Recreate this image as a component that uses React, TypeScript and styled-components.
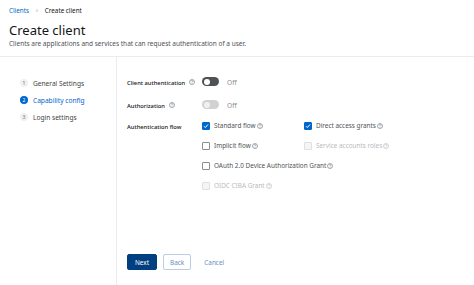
import React from 'react';
import styled, { createGlobalStyle } from 'styled-components';

const GlobalStyle = createGlobalStyle`
  html, body {
    margin: 0;
    padding: 0;
    background: #ffffff;
    font-family: 'Noto Sans', 'Open Sans', sans-serif;
    color: #151515;
  }
`;

const Page = styled.div`
  width: 474px;
  height: 285px;
  display: flex;
  flex-direction: column;
  overflow: hidden;
`;

const Header = styled.header`
  padding: 4px 9px 0;
  height: 52px;
  border-bottom: 1px solid #ececec;
  box-sizing: content-box;
`;

const Breadcrumb = styled.nav`
  display: flex;
  align-items: center;
  gap: 5px;
  font-size: 6.3px;
  height: 12px;
`;

const Crumb = styled.span<{ active?: boolean }>`
  color: ${({ active }) => (active ? '#151515' : '#0066cc')};
`;

const Sep = styled.span`
  color: #6a6e73;
  font-size: 6px;
  margin: 0 2px;
`;

const Title = styled.h1`
  margin: 6px 0 0;
  font-size: 13px;
  font-weight: 400;
  line-height: 16px;
`;

const Subtitle = styled.p`
  margin: 1px 0 0;
  font-size: 6.5px;
  line-height: 9px;
  color: #4f5255;
`;

const Body = styled.div`
  flex: 1;
  display: grid;
  grid-template-columns: 117px 1fr;
`;

const Steps = styled.ol`
  list-style: none;
  margin: 0;
  padding: 21px 0 0 20px;
  border-right: 1px solid #ececec;
  display: flex;
  flex-direction: column;
  gap: 7px;
`;

const Step = styled.li<{ current?: boolean }>`
  display: flex;
  align-items: center;
  gap: 5px;
  height: 10px;
  font-size: 6.6px;
  color: ${({ current }) => (current ? '#0066cc' : '#3c3f42')};
`;

const StepNum = styled.span<{ current?: boolean }>`
  width: 8px;
  height: 8px;
  border-radius: 50%;
  display: inline-flex;
  align-items: center;
  justify-content: center;
  font-size: 5px;
  background: ${({ current }) => (current ? '#0066cc' : '#f0f0f0')};
  color: ${({ current }) => (current ? '#ffffff' : '#6a6e73')};
`;

const Content = styled.div`
  display: flex;
  flex-direction: column;
  padding: 21px 0 15px 10px;
`;

const Form = styled.div`
  display: grid;
  grid-template-columns: 75px 1fr;
`;

const Label = styled.div<{ h: number }>`
  height: ${({ h }) => h}px;
  display: flex;
  align-items: flex-start;
  padding-top: 1px;
  font-size: 5.8px;
  font-weight: 500;
  color: #151515;
`;

const Field = styled.div<{ h: number }>`
  height: ${({ h }) => h}px;
  display: flex;
  align-items: flex-start;
`;

const Switch = styled.span<{ disabled?: boolean }>`
  width: 17px;
  height: 9px;
  border-radius: 5px;
  background: ${({ disabled }) => (disabled ? '#d2d2d2' : '#4f5255')};
  position: relative;
  margin-top: -1px;

  &::after {
    content: '';
    position: absolute;
    left: 1.5px;
    top: 1.5px;
    width: 6px;
    height: 6px;
    border-radius: 50%;
    background: ${({ disabled }) => (disabled ? '#f0f0f0' : '#ffffff')};
  }
`;

const SwitchText = styled.span`
  margin-left: 8px;
  font-size: 6.6px;
  color: #8a8d90;
`;

const FlowGrid = styled.div`
  display: grid;
  grid-template-columns: 102px 1fr;
  grid-auto-rows: 20px;
`;

const Check = styled.label<{ wide?: boolean; disabled?: boolean }>`
  display: flex;
  align-items: flex-start;
  gap: 4px;
  font-size: 6.4px;
  white-space: nowrap;
  grid-column: ${({ wide }) => (wide ? '1 / span 2' : 'auto')};
  color: ${({ disabled }) => (disabled ? '#b8bbbe' : '#4f5255')};
`;

const CheckText = styled.span`
  display: inline-flex;
  align-items: center;
  line-height: 7px;
`;

const Box = styled.span<{ checked?: boolean; disabled?: boolean }>`
  width: 8px;
  height: 8px;
  box-sizing: border-box;
  border-radius: 1px;
  margin-top: -0.5px;
  flex: none;
  display: inline-flex;
  align-items: center;
  justify-content: center;
  background: ${({ checked, disabled }) =>
    checked ? '#0066cc' : disabled ? '#f5f5f5' : '#ffffff'};
  border: 1px solid
    ${({ checked, disabled }) =>
      checked ? '#0066cc' : disabled ? '#e0e0e0' : '#8a8d90'};
`;

const Help = styled.span<{ faded?: boolean; gap?: number }>`
  display: inline-flex;
  margin-left: ${({ gap }) => gap ?? 1}px;
  opacity: ${({ faded }) => (faded ? 0.5 : 1)};
`;

const Footer = styled.div`
  margin-top: auto;
  display: flex;
  align-items: center;
  gap: 6px;
`;

const Button = styled.button<{ variant: 'primary' | 'secondary' | 'link' }>`
  height: 16px;
  padding: 0 ${({ variant }) => (variant === 'primary' ? 7 : 6)}px;
  font-family: inherit;
  font-size: 6.4px;
  border-radius: 2px;
  cursor: pointer;
  background: ${({ variant }) => (variant === 'primary' ? '#004080' : '#ffffff')};
  color: ${({ variant }) => (variant === 'primary' ? '#ffffff' : '#6a8fc0')};
  border: 1px solid
    ${({ variant }) =>
      variant === 'primary' ? '#004080' : variant === 'secondary' ? '#b9cde6' : 'transparent'};
`;

const HelpIcon = ({ faded, gap }: { faded?: boolean; gap?: number }) => (
  <Help faded={faded} gap={gap}>
    <svg width="6" height="6" viewBox="0 0 12 12">
      <circle cx="6" cy="6" r="5" fill="none" stroke="#6a6e73" strokeWidth="1.2" />
      <path d="M4.4 4.6a1.6 1.6 0 1 1 2.3 1.4c-.5.3-.7.6-.7 1.1" fill="none" stroke="#6a6e73" strokeWidth="1.1" />
      <circle cx="6" cy="8.8" r="0.7" fill="#6a6e73" />
    </svg>
  </Help>
);

const CheckMark = () => (
  <svg width="6" height="6" viewBox="0 0 12 12">
    <path d="M2 6.5l2.6 2.6L10 3" fill="none" stroke="#ffffff" strokeWidth="2" />
  </svg>
);

type Flow = { label: string; checked?: boolean; disabled?: boolean; wide?: boolean };

const flows: Flow[] = [
  { label: 'Standard flow', checked: true },
  { label: 'Direct access grants', checked: true },
  { label: 'Implicit flow' },
  { label: 'Service accounts roles', disabled: true },
  { label: 'OAuth 2.0 Device Authorization Grant', wide: true },
  { label: 'OIDC CIBA Grant', disabled: true, wide: true }
];

const steps = ['General Settings', 'Capability config', 'Login settings'];

const App: React.FC = () => (
  <Page>
    <GlobalStyle />
    <Header>
      <Breadcrumb>
        <Crumb>Clients</Crumb>
        <Sep>›</Sep>
        <Crumb active>Create client</Crumb>
      </Breadcrumb>
      <Title>Create client</Title>
      <Subtitle>
        Clients are applications and services that can request authentication of a user.
      </Subtitle>
    </Header>
    <Body>
      <Steps>
        {steps.map((s, i) => (
          <Step key={s} current={i === 1}>
            <StepNum current={i === 1}>{i + 1}</StepNum>
            {s}
          </Step>
        ))}
      </Steps>
      <Content>
        <Form>
          <Label h={22}>
            Client authentication
            <HelpIcon gap={4} />
          </Label>
          <Field h={22}>
            <Switch />
            <SwitchText>Off</SwitchText>
          </Field>
          <Label h={20}>
            Authorization
            <HelpIcon gap={4} />
          </Label>
          <Field h={20}>
            <Switch disabled />
            <SwitchText>Off</SwitchText>
          </Field>
          <Label h={80}>Authentication flow</Label>
          <Field h={80}>
            <FlowGrid>
              {flows.map((f) => (
                <Check key={f.label} wide={f.wide} disabled={f.disabled}>
                  <Box checked={f.checked} disabled={f.disabled}>
                    {f.checked && <CheckMark />}
                  </Box>
                  <CheckText>
                    {f.label}
                    <HelpIcon faded={f.disabled} />
                  </CheckText>
                </Check>
              ))}
            </FlowGrid>
          </Field>
        </Form>
        <Footer>
          <Button variant="primary">Next</Button>
          <Button variant="secondary">Back</Button>
          <Button variant="link">Cancel</Button>
        </Footer>
      </Content>
    </Body>
  </Page>
);

export default App;
